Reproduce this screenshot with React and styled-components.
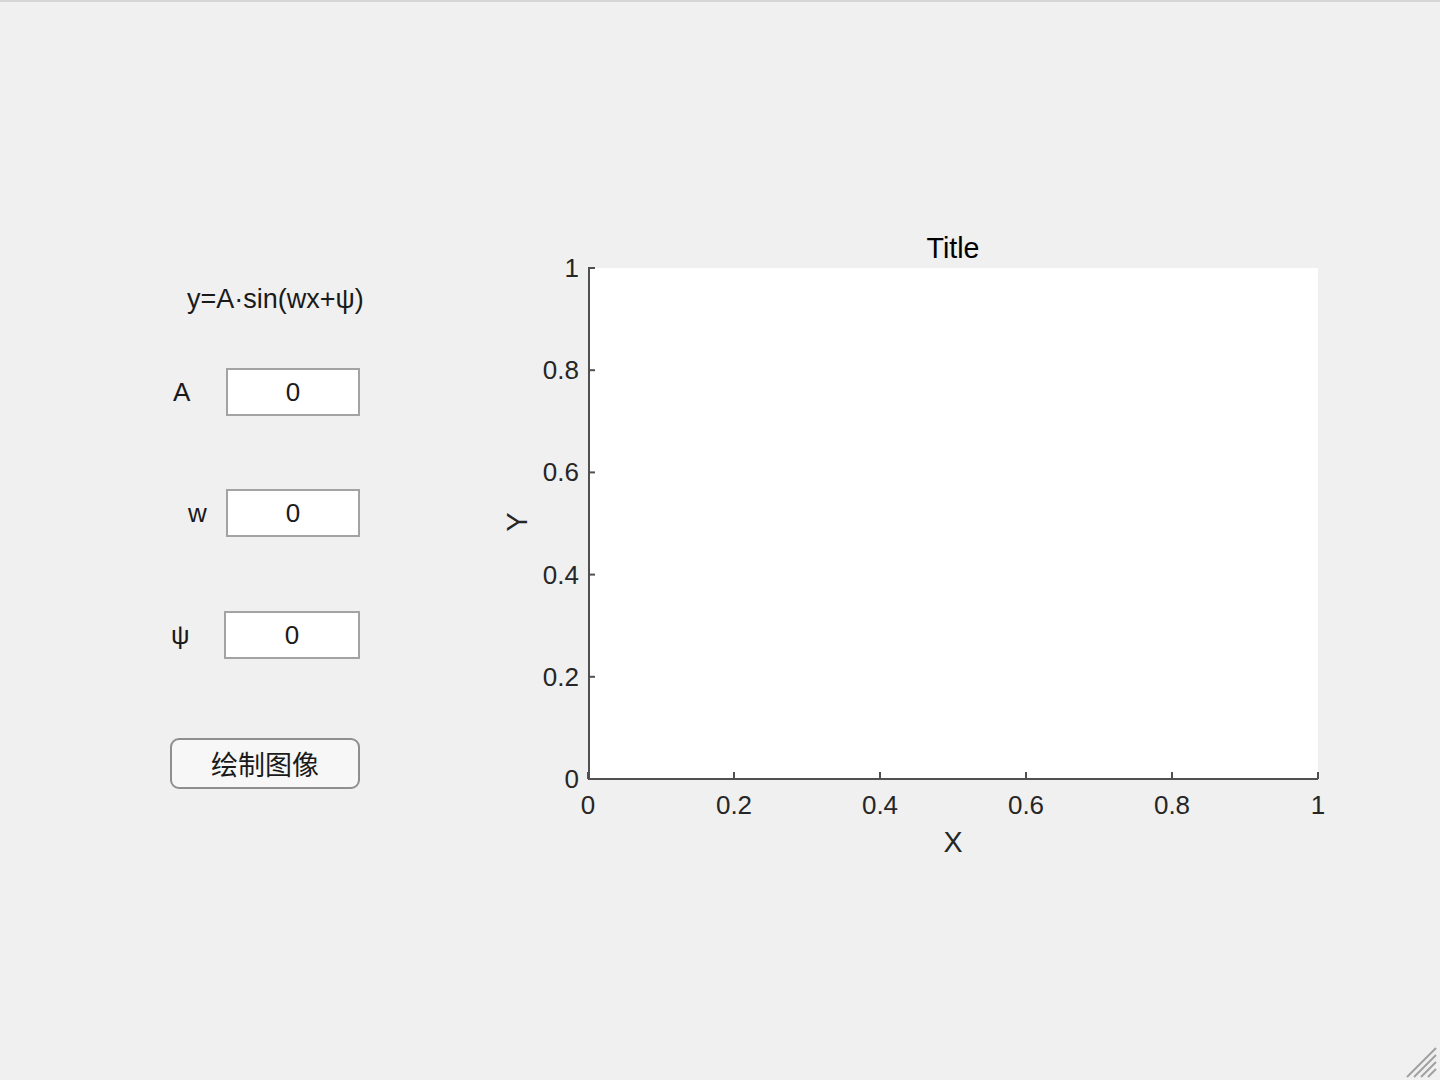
import React from "react";
import styled, { createGlobalStyle } from "styled-components";

const GlobalStyle = createGlobalStyle`
  html, body {
    margin: 0;
    padding: 0;
    background: #f0f0f0;
    overflow: hidden;
  }
`;

const Page = styled.div`
  position: relative;
  box-sizing: border-box;
  width: 1440px;
  height: 1080px;
  border-top: 2px solid #d6d6d6;
  background: #f0f0f0;
  display: flex;
  align-items: flex-start;
  font-family: "Liberation Sans", Arial, "Noto Sans CJK SC", sans-serif;
  color: #1a1a1a;
`;

const Controls = styled.div`
  display: flex;
  flex-direction: column;
  width: 190px;
  margin-left: 170px;
  padding-top: 281px;
`;

const Formula = styled.div`
  height: 32px;
  line-height: 32px;
  padding-left: 17px;
  font-size: 27px;
  white-space: nowrap;
`;

const Row = styled.div`
  display: flex;
  align-items: center;
  justify-content: space-between;
  height: 48px;
  margin-top: ${(p) => p.$mt}px;
`;

const Label = styled.span`
  margin-left: ${(p) => p.$indent}px;
  font-size: 26px;
  line-height: 48px;
`;

const NumberBox = styled.input`
  box-sizing: border-box;
  width: ${(p) => p.$w}px;
  height: 48px;
  border: 2px solid #a3a3a3;
  background: #fff;
  padding: 0;
  text-align: center;
  font-family: inherit;
  font-size: 26px;
  color: #1a1a1a;
  outline: none;
`;

const PlotButton = styled.button`
  box-sizing: border-box;
  margin-top: 79px;
  width: 190px;
  height: 51px;
  border: 2px solid #8f8f8f;
  border-radius: 9px;
  background: #f7f7f7;
  font-family: "Noto Sans CJK SC", "Liberation Sans", sans-serif;
  font-size: 27px;
  color: #1a1a1a;
  padding: 0;
  cursor: pointer;
`;

const ChartWrap = styled.div`
  margin-left: 120px;
  margin-top: 218px;
  width: 860px;
  height: 680px;
`;

const Grip = styled.svg`
  position: absolute;
  right: 2px;
  bottom: 1px;
`;

// axes box inside the svg
const L = 108;
const R = 838;
const T = 48;
const B = 559;
const yTicks = [0, 0.2, 0.4, 0.6, 0.8, 1];
const xTicks = [0, 0.2, 0.4, 0.6, 0.8, 1];
const axisColor = "#505050";
const tickText = "#262626";

const Axes = () => (
  <svg width="860" height="680" fontFamily="'Liberation Sans', Arial, sans-serif">
    <rect x={L} y={T} width={R - L} height={B - T} fill="#fff" />
    <text x={(L + R) / 2} y={28} fontSize="28.6" textAnchor="middle" dominantBaseline="central" fill="#000">
      Title
    </text>
    <line x1={L + 1} y1={T} x2={L + 1} y2={B} stroke={axisColor} strokeWidth="2" />
    <line x1={L} y1={B} x2={R} y2={B} stroke={axisColor} strokeWidth="2" />
    {yTicks.map((v) => {
      const y = B - v * (B - T);
      return (
        <g key={"y" + v}>
          <line x1={L} y1={y} x2={L + 7} y2={y} stroke={axisColor} strokeWidth="2" />
          <text x={L - 9} y={y} fontSize="26" textAnchor="end" dominantBaseline="central" fill={tickText}>
            {v}
          </text>
        </g>
      );
    })}
    {xTicks.map((v) => {
      const x = L + v * (R - L);
      return (
        <g key={"x" + v}>
          <line x1={x} y1={B} x2={x} y2={B - 7} stroke={axisColor} strokeWidth="2" />
          <text x={x} y={585} fontSize="26" textAnchor="middle" dominantBaseline="central" fill={tickText}>
            {v}
          </text>
        </g>
      );
    })}
    <text x={473} y={622} fontSize="28.6" textAnchor="middle" dominantBaseline="central" fill={tickText}>
      X
    </text>
    <text
      x={37}
      y={302}
      fontSize="28.6"
      textAnchor="middle"
      dominantBaseline="central"
      fill={tickText}
      transform="rotate(-90 37 302)"
    >
      Y
    </text>
  </svg>
);

const App = () => {
  return (
    <Page>
      <GlobalStyle />
      <Controls>
        <Formula>y=A·sin(wx+ψ)</Formula>
        <Row $mt={53}>
          <Label $indent={3}>A</Label>
          <NumberBox $w={134} defaultValue="0" />
        </Row>
        <Row $mt={73}>
          <Label $indent={18}>w</Label>
          <NumberBox $w={134} defaultValue="0" />
        </Row>
        <Row $mt={74}>
          <Label $indent={1}>ψ</Label>
          <NumberBox $w={136} defaultValue="0" />
        </Row>
        <PlotButton>绘制图像</PlotButton>
      </Controls>
      <ChartWrap>
        <Axes />
      </ChartWrap>
      <Grip width="34" height="34" viewBox="0 0 34 34">
        {[0, 7, 14, 21].map((d) => (
          <line key={d} x1={3 + d} y1={32} x2={32} y2={3 + d} stroke="#a0a0a0" strokeWidth="2" />
        ))}
      </Grip>
    </Page>
  );
};

export default App;
